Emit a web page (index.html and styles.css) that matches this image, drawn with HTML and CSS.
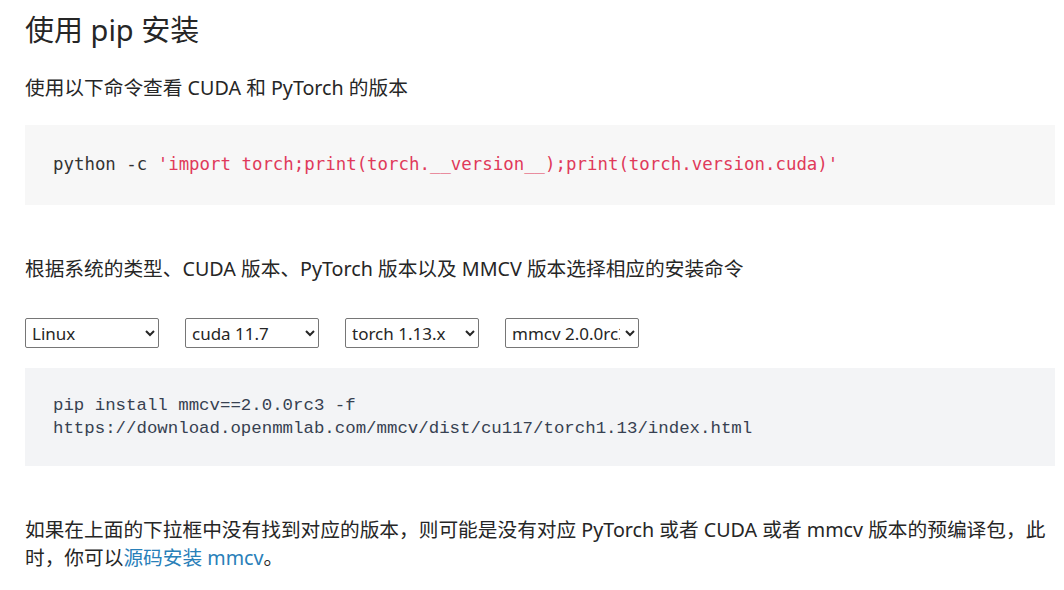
FILE: index.html
```html
<!DOCTYPE html>
<html lang="zh-CN">
<head>
    <meta charset="UTF-8">
    <title>使用 pip 安装</title>
    <link rel="stylesheet" href="styles.css">
</head>
<body>
    <div class="section">
        <h1>使用 pip 安装</h1>
        <p class="intro">使用以下命令查看 CUDA 和 PyTorch 的版本</p>

        <pre class="code check"><span class="cmd">python -c </span><span class="str">'import torch;print(torch.__version__);print(torch.version.cuda)'</span></pre>

        <p class="choose">根据系统的类型、CUDA 版本、PyTorch 版本以及 MMCV 版本选择相应的安装命令</p>

        <div class="selects">
            <select id="os"><option>Linux</option><option>Windows</option></select>
            <select id="cuda"><option>cuda 11.7</option><option>cuda 11.6</option></select>
            <select id="torch"><option>torch 1.13.x</option><option>torch 1.12.x</option></select>
            <select id="mmcv"><option>mmcv 2.0.0rc3</option><option>mmcv 2.0.0rc2</option></select>
        </div>

        <pre class="code install" id="installCmd">pip install mmcv==2.0.0rc3 -f
https://download.openmmlab.com/mmcv/dist/cu117/torch1.13/index.html</pre>

        <p class="note">如果在上面的下拉框中没有找到对应的版本，则可能是没有对应 PyTorch 或者 CUDA 或者 mmcv 版本的预编译包，此时，你可以<a href="#">源码安装 mmcv</a>。</p>
    </div>
</body>
</html>
```

FILE: styles.css
```css
/* Base */
* {
    box-sizing: border-box;
}

body {
    margin: 0;
    background: #fff;
    color: #262626;
    font-family: "Noto Sans", "Noto Sans CJK SC", sans-serif;
}

.section {
    width: 1055px;
    padding: 8px 0 0 25px;
}

h1 {
    margin: 0;
    font-size: 29px;
    font-weight: 400;
    line-height: 44px;
}

p {
    margin: 0;
    font-size: 19.7px;
    line-height: 28px;
}

.intro {
    margin-top: 22px;
}

/* Code blocks */
.code {
    margin: 23px 0 0;
    padding: 28px 28px 29px;
    font-family: "DejaVu Sans Mono", monospace;
    font-size: 17.4px;
    line-height: 23px;
    white-space: pre;
}

.check {
    background: #f7f7f7;
    color: #333;
}

.check .str {
    color: #e03a5a;
}

.install {
    margin-top: 20px;
    padding: 26px 28px 26px;
    background: #f3f4f6;
    color: #374151;
    font-family: "Liberation Mono", monospace;
}

.choose {
    margin-top: 50px;
}

/* Version pickers */
.selects {
    display: flex;
    gap: 26px;
    margin-top: 35px;
}

.selects select {
    width: 134px;
    height: 30px;
    padding: 0 2px;
    border: 1px solid #767676;
    border-radius: 2px;
    background: #fff;
    color: #262626;
    font-family: "Noto Sans", "Noto Sans CJK SC", sans-serif;
    font-size: 17px;
}

.note {
    margin-top: 50px;
}

.note a {
    color: #2980b9;
    text-decoration: none;
}
```
